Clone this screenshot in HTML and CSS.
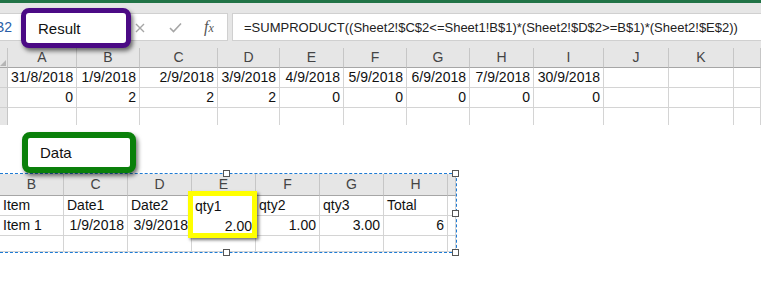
FILE: index.html
```html
<!DOCTYPE html>
<html lang="en">
<head>
    <meta charset="UTF-8">
    <title>SUMPRODUCT date ranges</title>
    <link rel="stylesheet" href="styles.css">
</head>
<body>
    <div class="ribbon-edge"></div>

    <!-- Formula bar -->
    <div class="formula-bar">
        <div class="name-box">B2</div>
        <div class="cmd-box">
            <svg class="cmd cancel" width="10" height="10" viewBox="0 0 10 10">
                <path d="M1 1 L9 9 M9 1 L1 9" stroke="#a6a6a6" stroke-width="1.4" fill="none"/>
            </svg>
            <svg class="cmd enter" width="13" height="11" viewBox="0 0 13 11">
                <path d="M1 6 L4.5 9.5 L12 1.5" stroke="#a6a6a6" stroke-width="1.6" fill="none"/>
            </svg>
            <span class="fx"><i>f</i><i class="fx-x">x</i></span>
        </div>
        <div class="formula">=SUMPRODUCT((Sheet2!$C$2&lt;=Sheet1!B$1)*(Sheet2!$D$2&gt;=B$1)*(Sheet2!$E$2))</div>
    </div>

    <!-- Result sheet -->
    <div class="sheet">
        <div class="corner"><span class="corner-tri"></span></div>
        <div class="col-head">A</div>
        <div class="col-head">B</div>
        <div class="col-head">C</div>
        <div class="col-head">D</div>
        <div class="col-head">E</div>
        <div class="col-head">F</div>
        <div class="col-head">G</div>
        <div class="col-head">H</div>
        <div class="col-head">I</div>
        <div class="col-head">J</div>
        <div class="col-head">K</div>
        <div class="col-head"></div>

        <div class="row-head"></div>
        <div class="cell num">31/8/2018</div>
        <div class="cell num">1/9/2018</div>
        <div class="cell num">2/9/2018</div>
        <div class="cell num">3/9/2018</div>
        <div class="cell num">4/9/2018</div>
        <div class="cell num">5/9/2018</div>
        <div class="cell num">6/9/2018</div>
        <div class="cell num">7/9/2018</div>
        <div class="cell num">30/9/2018</div>
        <div class="cell"></div>
        <div class="cell"></div>
        <div class="cell"></div>

        <div class="row-head"></div>
        <div class="cell num">0</div>
        <div class="cell num">2</div>
        <div class="cell num">2</div>
        <div class="cell num">2</div>
        <div class="cell num">0</div>
        <div class="cell num">0</div>
        <div class="cell num">0</div>
        <div class="cell num">0</div>
        <div class="cell num">0</div>
        <div class="cell"></div>
        <div class="cell"></div>
        <div class="cell"></div>

        <div class="row-head"></div>
        <div class="cell"></div>
        <div class="cell"></div>
        <div class="cell"></div>
        <div class="cell"></div>
        <div class="cell"></div>
        <div class="cell"></div>
        <div class="cell"></div>
        <div class="cell"></div>
        <div class="cell"></div>
        <div class="cell"></div>
        <div class="cell"></div>
        <div class="cell"></div>
    </div>

    <!-- Data picture (selected) -->
    <div class="data-pic">
        <div class="data-grid">
            <div class="col-head">B</div>
            <div class="col-head">C</div>
            <div class="col-head">D</div>
            <div class="col-head">E</div>
            <div class="col-head">F</div>
            <div class="col-head">G</div>
            <div class="col-head">H</div>
            <div class="col-head"></div>

            <div class="cell">Item</div>
            <div class="cell">Date1</div>
            <div class="cell">Date2</div>
            <div class="cell"></div>
            <div class="cell">qty2</div>
            <div class="cell">qty3</div>
            <div class="cell">Total</div>
            <div class="cell"></div>

            <div class="cell">Item 1</div>
            <div class="cell num">1/9/2018</div>
            <div class="cell num">3/9/2018</div>
            <div class="cell"></div>
            <div class="cell num">1.00</div>
            <div class="cell num">3.00</div>
            <div class="cell num">6</div>
            <div class="cell"></div>

            <div class="cell"></div>
            <div class="cell"></div>
            <div class="cell"></div>
            <div class="cell"></div>
            <div class="cell"></div>
            <div class="cell"></div>
            <div class="cell"></div>
            <div class="cell"></div>
        </div>

        <!-- highlighted qty1 column -->
        <div class="highlight">
            <div class="hl-line">qty1</div>
            <div class="hl-line num">2.00</div>
        </div>

        <span class="handle h-top-mid"></span>
        <span class="handle h-top-right"></span>
        <span class="handle h-mid-right"></span>
        <span class="handle h-bot-right"></span>
        <span class="handle h-bot-mid"></span>
    </div>

    <!-- Callout labels -->
    <div class="callout callout-result">Result</div>
    <div class="callout callout-data">Data</div>
</body>
</html>
```

FILE: styles.css
```css
body {
    margin: 0;
    width: 761px;
    height: 284px;
    overflow: hidden;
    position: relative;
    background-color: #fff;
    font-family: "Liberation Sans", Arial, sans-serif;
    font-size: 14px;
    color: #111;
}
.ribbon-edge {
    height: 3px;
    background-color: #217346;
}
.formula-bar {
    display: flex;
    height: 45px;
    padding-top: 10px;
    box-sizing: border-box;
    background-color: #e6e6e6;
}
.name-box,
.cmd-box,
.formula {
    height: 28px;
    box-sizing: border-box;
    background-color: #fff;
    border: 1px solid #d0d0d0;
    display: flex;
    align-items: center;
}
.name-box {
    flex: 0 0 121px;
    margin-right: 4px;
    border-left: none;
    color: #2a5fa8;
    text-indent: -5px;
}
.cmd-box {
    flex: 0 0 103px;
    margin-right: 4px;
    position: relative;
}
.cmd {
    position: absolute;
}
.cancel {
    left: 9px;
    top: 9px;
}
.enter {
    left: 43px;
    top: 8px;
}
.fx {
    position: absolute;
    left: 78px;
    top: 4px;
    font-family: "Liberation Serif", serif;
    font-size: 16px;
    color: #555;
}
.fx-x {
    font-size: 12px;
}
.formula {
    flex: 1;
    min-width: 0;
    margin-right: -6px;
    border-right: none;
    padding-left: 11px;
    font-size: 13px;
    color: #222;
    white-space: nowrap;
    overflow: hidden;
}

/* result sheet */
.sheet {
    display: grid;
    grid-template-columns: 8px 69px 63px 78px 62px 64px 63px 63px 64px 70px 65px 65px 1fr;
    grid-template-rows: 20px 20px 20px 20px;
    height: 77px;
    overflow: hidden;
}
.col-head {
    background-color: #e6e6e6;
    border-right: 1px solid #c6c6c6;
    border-bottom: 1px solid #a6a6a6;
    box-sizing: border-box;
    text-align: center;
    line-height: 19px;
    color: #444;
}
.corner {
    position: relative;
    background-color: #e6e6e6;
    border-right: 1px solid #c6c6c6;
    border-bottom: 1px solid #a6a6a6;
}
.corner-tri {
    position: absolute;
    right: 1px;
    bottom: 1px;
    border-left: 6px solid transparent;
    border-bottom: 6px solid #b5b5b5;
}
.row-head {
    background-color: #e6e6e6;
    border-right: 1px solid #c6c6c6;
    border-bottom: 1px solid #d0d0d0;
}
.cell {
    border-right: 1px solid #d4d4d4;
    border-bottom: 1px solid #d4d4d4;
    box-sizing: border-box;
    padding: 0 3px;
    line-height: 19px;
    white-space: nowrap;
    overflow: hidden;
}
.cell.num {
    text-align: right;
    padding-right: 3px;
}

/* data picture */
.data-pic {
    position: relative;
    margin-top: 48px;
    width: 457px;
    height: 80px;
    box-sizing: border-box;
    border-top: 1px dashed #1e7bd4;
    border-right: 1px dashed #1e7bd4;
    border-bottom: 1px dashed #1e7bd4;
}
.data-grid {
    display: grid;
    grid-template-columns: 64px 64px 64px 64px 64px 64px 64px 1fr;
    grid-template-rows: 22px 20px 20px 16px;
    height: 78px;
    overflow: hidden;
}
.data-grid .col-head {
    line-height: 21px;
}
.highlight {
    position: absolute;
    left: 188px;
    top: 17px;
    width: 69px;
    height: 47px;
    box-sizing: border-box;
    border: 5px solid #ffff00;
    background-color: #fff;
    box-shadow: 2px 2px 3px rgba(0, 0, 0, 0.55);
    padding: 1px 0 0 2px;
}
.hl-line {
    height: 20px;
    line-height: 19px;
}
.hl-line.num {
    text-align: right;
}
.handle {
    position: absolute;
    width: 5px;
    height: 5px;
    background-color: #fff;
    border: 1px solid #555;
}
.h-top-mid { left: 223px; top: -4px; }
.h-top-right { left: 452px; top: -4px; }
.h-mid-right { left: 452px; top: 36px; }
.h-bot-right { left: 452px; top: 75px; }
.h-bot-mid { left: 223px; top: 75px; }

/* callout text boxes */
.callout {
    position: absolute;
    box-sizing: border-box;
    background-color: #fff;
    border-radius: 8px;
    box-shadow: 2px 3px 4px rgba(0, 0, 0, 0.55);
    font-size: 15px;
    color: #111;
    display: flex;
    align-items: center;
}
.callout-result {
    left: 21px;
    top: 8px;
    width: 110px;
    height: 40px;
    border: 5px solid #4b0a85;
    padding-left: 12px;
}
.callout-data {
    left: 22px;
    top: 132px;
    width: 114px;
    height: 41px;
    border: 6px solid #0a800a;
    padding-left: 12px;
}
```
